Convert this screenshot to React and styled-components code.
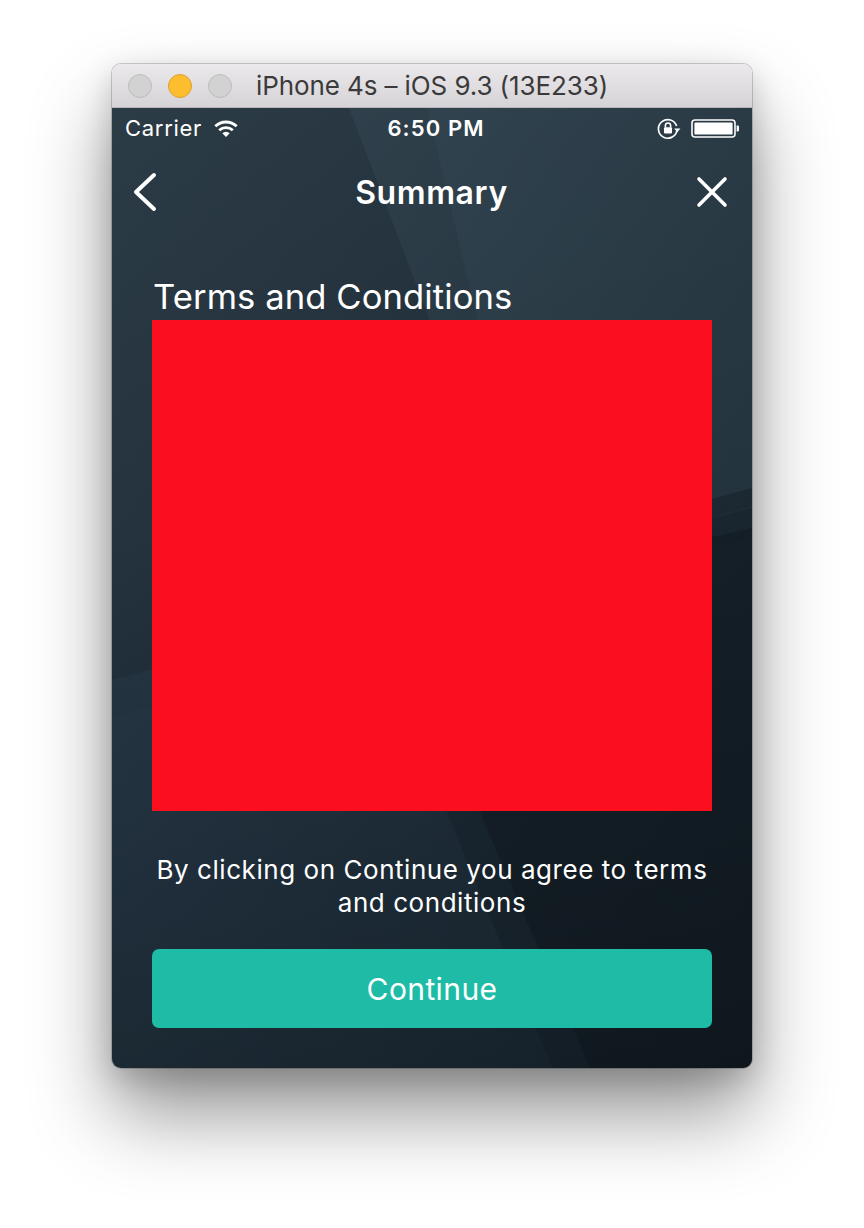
import React from "react";
import styled, { createGlobalStyle } from "styled-components";

const GlobalStyle = createGlobalStyle`
  html, body {
    margin: 0;
    padding: 0;
    background: #ffffff;
  }
  body {
    font-family: Inter, "Noto Sans", sans-serif;
  }
`;

const Page = styled.div`
  width: 864px;
  height: 1228px;
  padding-top: 64px;
  padding-left: 112px;
  box-sizing: border-box;
`;

const Window = styled.div`
  width: 640px;
  border-radius: 9px;
  overflow: hidden;
  box-shadow: 0 0 0 1px rgba(0, 0, 0, 0.18), 0 46px 80px rgba(0, 0, 0, 0.42),
    0 10px 30px rgba(0, 0, 0, 0.18);
`;

const TitleBar = styled.div`
  height: 44px;
  display: flex;
  align-items: center;
  position: relative;
  background: linear-gradient(#ebe9eb, #d5d3d5);
  border-bottom: 1px solid #b9b7b9;
  box-sizing: border-box;
`;

const Lights = styled.div`
  display: flex;
  gap: 16px;
  padding-left: 16px;
`;

const Light = styled.span`
  width: 22px;
  height: 22px;
  border-radius: 50%;
  background: ${(props) => props.color};
  border: 1px solid ${(props) => props.edge};
`;

const WindowTitle = styled.div`
  position: absolute;
  left: 0;
  right: 0;
  text-align: center;
  font-size: 26px;
  color: #3b3a3b;
  letter-spacing: -0.1px;
  pointer-events: none;
`;

const Screen = styled.div`
  position: relative;
  height: 960px;
  display: flex;
  flex-direction: column;
  color: #ffffff;
  background: linear-gradient(170deg, #2c3c47 0%, #283844 40%, #1f2d38 75%, #18232c 100%);
`;

const Backdrop = styled.svg`
  position: absolute;
  inset: 0;
  width: 100%;
  height: 100%;
`;

const Layer = styled.div`
  position: relative;
  display: flex;
  flex-direction: column;
  flex: 1;
`;

const StatusBar = styled.div`
  height: 40px;
  display: flex;
  align-items: center;
  justify-content: space-between;
  padding: 0 12px 0 13px;
  font-size: 22px;
`;

const StatusSide = styled.div`
  display: flex;
  align-items: center;
  gap: ${(props) => props.gap || 10}px;
  width: 160px;
  justify-content: ${(props) => (props.end ? "flex-end" : "flex-start")};
`;

const Carrier = styled.span`
  letter-spacing: 0.7px;
`;

const Clock = styled.div`
  font-weight: 600;
  font-size: 22px;
  letter-spacing: 1.1px;
  margin-left: 7px;
`;

const NavBar = styled.div`
  height: 88px;
  display: grid;
  grid-template-columns: 1fr auto 1fr;
  align-items: center;
  padding: 0 24px 0 17px;
`;

const NavTitle = styled.div`
  font-size: 32px;
  font-weight: 600;
  letter-spacing: 0.6px;
  transform: translateX(3px);
`;

const NavButton = styled.div`
  width: 32px;
  height: 40px;
  display: flex;
  align-items: center;
  justify-content: center;
  justify-self: ${(props) => (props.end ? "end" : "start")};
`;

const Content = styled.div`
  padding: 40px 40px 40px 40px;
  display: flex;
  flex-direction: column;
`;

const Heading = styled.h2`
  margin: 0 0 3px 1px;
  font-size: 34.6px;
  line-height: 41px;
  font-weight: 400;
  letter-spacing: 0.1px;
`;

const TermsBox = styled.div`
  height: 491px;
  background: #fb0e1d;
`;

const Notice = styled.p`
  margin: 42px 0 0 0;
  font-size: 26px;
  line-height: 33px;
  text-align: center;
  font-weight: 400;
  letter-spacing: 0.55px;
`;

const ContinueButton = styled.button`
  margin-top: 30px;
  height: 79px;
  border: none;
  border-radius: 7px;
  background: #1ebca6;
  color: #ffffff;
  font-family: Inter, "Noto Sans", sans-serif;
  font-size: 30px;
  font-weight: 400;
  letter-spacing: 0.4px;
  cursor: pointer;
`;

const Wifi = () => (
  <svg width="24" height="19" viewBox="0 0 24 19">
    <path d="M1.3 7.3 A15.5 15.5 0 0 1 22.7 7.3" stroke="#fff" strokeWidth="2.8" fill="none" />
    <path d="M5.2 11.2 A10 10 0 0 1 18.8 11.2" stroke="#fff" strokeWidth="2.8" fill="none" />
    <path d="M12 18 L8.3 14.3 A5.2 5.2 0 0 1 15.7 14.3 Z" fill="#fff" />
  </svg>
);

const RotationLock = () => (
  <svg width="24" height="23" viewBox="0 0 24 23">
    <path d="M19.6 9 A9.3 9.3 0 1 0 19.9 13.6" stroke="#fff" strokeWidth="1.7" fill="none" />
    <path d="M17.2 11.6 L23.4 11.6 L20.3 15.2 Z" fill="#fff" />
    <path d="M8.4 10.4 V8.6 A2.6 2.6 0 0 1 13.6 8.6 V10.4" stroke="#fff" strokeWidth="1.6" fill="none" />
    <rect x="7" y="10.2" width="8" height="6.4" rx="1" fill="#fff" />
  </svg>
);

const Battery = () => (
  <svg width="49" height="19" viewBox="0 0 49 19">
    <rect x="1" y="1" width="43" height="17" rx="3" stroke="#fff" strokeWidth="1.6" fill="none" />
    <rect x="3.4" y="3.4" width="38.2" height="12.2" rx="1.2" fill="#fff" />
    <path d="M45.6 6.5 h1.2 a1.2 1.2 0 0 1 1.2 1.2 v3.6 a1.2 1.2 0 0 1 -1.2 1.2 h-1.2 Z" fill="#fff" />
  </svg>
);

const BackIcon = () => (
  <svg width="28" height="40" viewBox="0 0 28 40">
    <path d="M23 3 L5 20 L23 37" stroke="#fff" strokeWidth="4" fill="none" strokeLinecap="round" strokeLinejoin="round" />
  </svg>
);

const CloseIcon = () => (
  <svg width="32" height="32" viewBox="0 0 32 32">
    <path d="M3 3 L29 29 M29 3 L3 29" stroke="#fff" strokeWidth="3.6" fill="none" strokeLinecap="round" />
  </svg>
);

const Streaks = () => (
  <Backdrop viewBox="0 0 640 960" preserveAspectRatio="none">
    <defs>
      <linearGradient id="shade" x1="0" y1="0" x2="1" y2="1">
        <stop offset="0" stopColor="#0b1217" stopOpacity="0" />
        <stop offset="1" stopColor="#0b1217" stopOpacity="0.55" />
      </linearGradient>
    </defs>
    <polygon points="237,0 640,0 640,380 406,444" fill="#5b7c92" fillOpacity="0.16" />
    <polygon points="315,0 640,0 640,380 420,440" fill="#5b7c92" fillOpacity="0.1" />
    <polygon points="0,572 640,398 640,960 0,960" fill="#4a6d86" fillOpacity="0.12" />
    <polygon points="0,610 640,428 640,960 0,960" fill="#4a6d86" fillOpacity="0.06" />
    <polygon points="251,500 640,400 640,960 440,960" fill="#000" fillOpacity="0.16" />
    <polygon points="280,500 640,420 640,960 478,960" fill="#000" fillOpacity="0.22" />
    <rect x="0" y="0" width="640" height="960" fill="url(#shade)" />
  </Backdrop>
);

const App = () => {
  return (
    <Page>
      <GlobalStyle />
      <Window>
        <TitleBar>
          <Lights>
            <Light color="#d3d2d3" edge="#bdbcbd" />
            <Light color="#fcbd2f" edge="#dfa033" />
            <Light color="#d3d2d3" edge="#bdbcbd" />
          </Lights>
          <WindowTitle>iPhone 4s – iOS 9.3 (13E233)</WindowTitle>
        </TitleBar>
        <Screen>
          <Streaks />
          <Layer>
            <StatusBar>
              <StatusSide gap={12}>
                <Carrier>Carrier</Carrier>
                <Wifi />
              </StatusSide>
              <Clock>6:50 PM</Clock>
              <StatusSide end gap={10}>
                <RotationLock />
                <Battery />
              </StatusSide>
            </StatusBar>
            <NavBar>
              <NavButton>
                <BackIcon />
              </NavButton>
              <NavTitle>Summary</NavTitle>
              <NavButton end>
                <CloseIcon />
              </NavButton>
            </NavBar>
            <Content>
              <Heading>Terms and Conditions</Heading>
              <TermsBox />
              <Notice>
                By clicking on Continue you agree to terms and conditions
              </Notice>
              <ContinueButton>Continue</ContinueButton>
            </Content>
          </Layer>
        </Screen>
      </Window>
    </Page>
  );
};

export default App;
